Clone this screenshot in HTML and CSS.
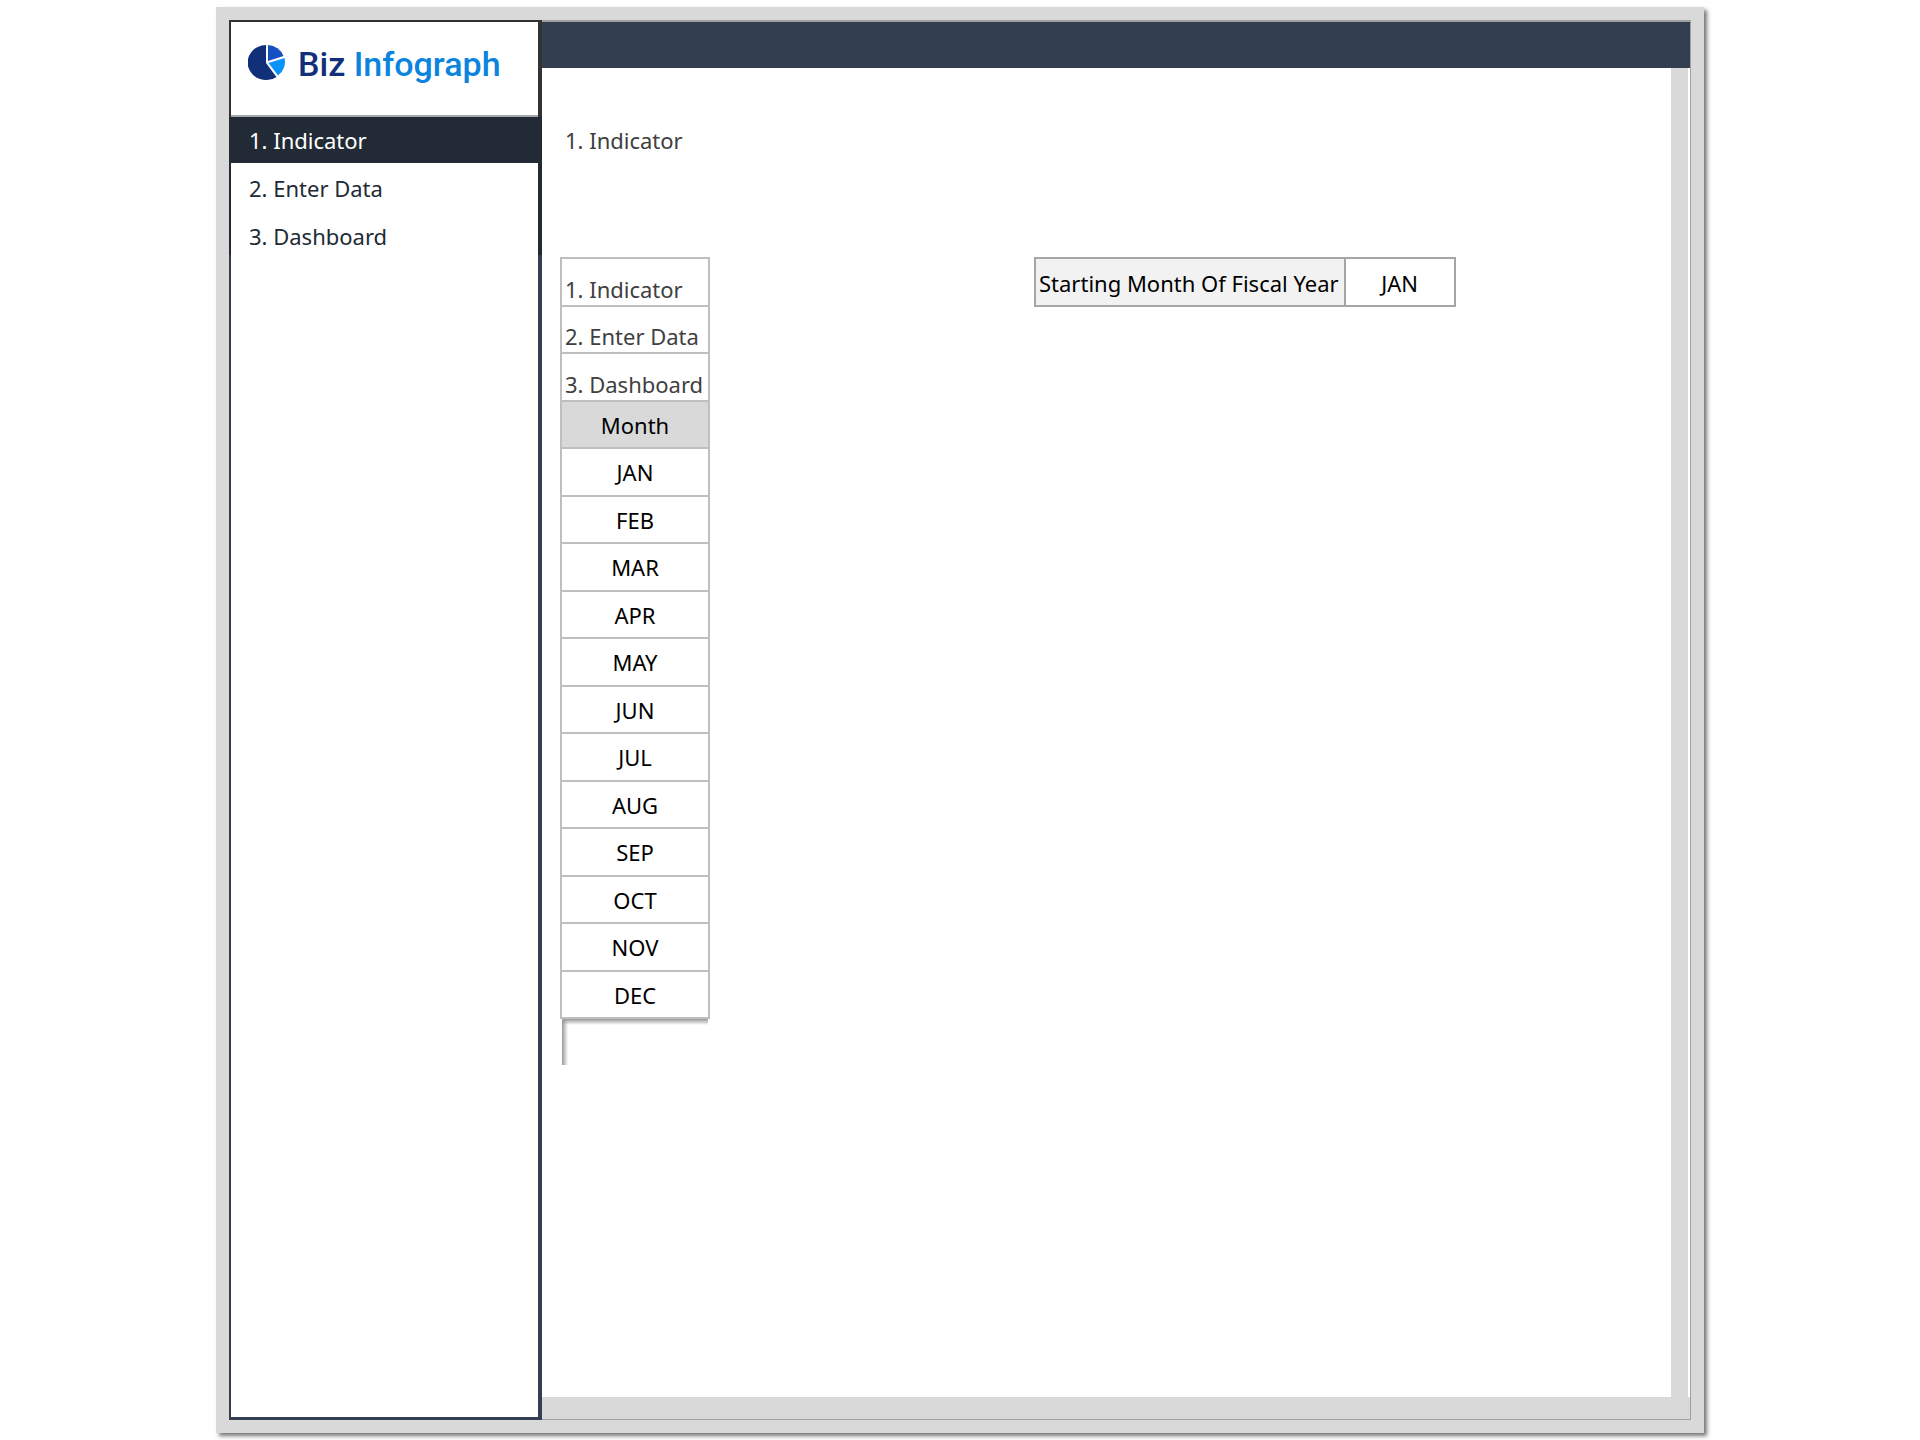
FILE: index.html
```html
<!DOCTYPE html>
<html lang="en">
<head>
<meta charset="utf-8">
<title>Biz Infograph - Indicator</title>
<link rel="stylesheet" href="styles.css">
</head>
<body>
<div class="sheet">
  <aside class="sidebar">
    <div class="brand">
      <svg class="brand-mark" viewBox="0 0 38 36" width="38" height="36" aria-hidden="true">
        <path fill="#12307a" d="M18 1V19L28.500 33A18.500 17.500 0 1 1 18 1Z"/>
        <path fill="#1450c0" d="M20 1A18 17 0 0 1 35.500 12L20 17Z"/>
        <path fill="#0a93fa" d="M36.500 14A17.500 17 0 0 1 30 31.500L20.500 19Z"/>
      </svg>
      <span class="brand-name"><span class="brand-dark">Biz</span> Infograph</span>
    </div>
    <nav class="menu">
      <a class="menu-item active" href="#indicator">1. Indicator</a>
      <a class="menu-item" href="#data">2. Enter Data</a>
      <a class="menu-item" href="#dashboard">3. Dashboard</a>
    </nav>
  </aside>
  <div class="workspace">
    <header class="topbar"></header>
    <main class="content">
      <h1 class="title">1. Indicator</h1>
      <div class="panels">
        <div class="list">
          <table class="months">
            <tbody>
              <tr class="link-row"><td>1. Indicator</td></tr>
              <tr class="link-row"><td>2. Enter Data</td></tr>
              <tr class="link-row"><td>3. Dashboard</td></tr>
              <tr><th scope="col">Month</th></tr>
              <tr><td>JAN</td></tr>
              <tr><td>FEB</td></tr>
              <tr><td>MAR</td></tr>
              <tr><td>APR</td></tr>
              <tr><td>MAY</td></tr>
              <tr><td>JUN</td></tr>
              <tr><td>JUL</td></tr>
              <tr><td>AUG</td></tr>
              <tr><td>SEP</td></tr>
              <tr><td>OCT</td></tr>
              <tr><td>NOV</td></tr>
              <tr><td>DEC</td></tr>
            </tbody>
          </table>
          <div class="list-shadow"></div>
        </div>
        <div class="fiscal">
          <label class="fiscal-label" for="start-month">Starting Month Of Fiscal Year</label>
          <select class="fiscal-select" id="start-month">
            <option>JAN</option><option>FEB</option><option>MAR</option><option>APR</option>
            <option>MAY</option><option>JUN</option><option>JUL</option><option>AUG</option>
            <option>SEP</option><option>OCT</option><option>NOV</option><option>DEC</option>
          </select>
        </div>
      </div>
    </main>
    <div class="bottom-strip"></div>
  </div>
</div>
</body>
</html>
```
FILE: styles.css
```css
* { box-sizing: border-box; }

body {
  margin: 0;
  padding: 7px 0;
  background: #fff;
  color: #000;
  font: 22px/30px "Noto Sans", sans-serif;
}

.sheet {
  display: flex;
  width: 77.5%;
  min-height: calc(100vh - 14px);
  margin: 0 auto;
  padding: 13px;
  background: #d9d9d9;
  box-shadow: 3px 3px 4px #777;
}

/* Sidebar */
.sidebar {
  flex: 0 0 313px;
  border: solid #333f50;
  border-width: 2px 4px 3px 2px;
  border-image: linear-gradient(#333 97px, #222b35 97px 235px, #333f50 235px) 2 4 3 2;
  background: #fff;
}

.brand {
  display: flex;
  align-items: center;
  gap: 12px;
  height: 95px;
  padding: 0 0 14px 17px;
  border-bottom: 2px solid #a6a9ad;
}

.brand-name {
  padding-top: 4px;
  color: #0a84dc;
  font: 500 34px/40px Roboto, sans-serif;
  white-space: nowrap;
}

.brand-dark { color: #12307a; }

.menu {
  display: flex;
  flex-direction: column;
  gap: 2px;
}

.menu-item {
  padding: 8px 18px;
  color: #222b35;
  text-decoration: none;
}

.menu-item.active {
  background: #222b35;
  color: #fff;
}

/* Workspace */
.workspace {
  display: flex;
  flex: 1;
  flex-direction: column;
  border: solid #a0a0a0;
  border-width: 2px 1px 1px 0;
}

.topbar {
  height: 46px;
  background: #333f50;
}

.content {
  flex: 1;
  padding: 57px 18px 0;
  border-right: 17px solid #d9d9d9;
  background: #fff;
  box-shadow: 2px 0 #fff;
  margin-right: 2px;
}

.bottom-strip {
  height: 22px;
  background: #d9d9d9;
}

.title {
  margin: 0 0 102px;
  padding-left: 5px;
  color: #404040;
  font: inherit;
}

.panels {
  display: flex;
  align-items: flex-start;
  gap: 324px;
}

.months {
  width: 150px;
  border-collapse: collapse;
  table-layout: fixed;
}

.months tr { height: 47px; }
.months tr:nth-child(odd) { height: 48px; }

.months td,
.months th {
  padding: 0;
  border: 2px solid #bfbfbf;
  font-weight: normal;
  text-align: center;
  white-space: nowrap;
}

.months th { background: #d9d9d9; }

.months .link-row td {
  padding: 13px 0 0 3px;
  color: #404040;
  text-align: left;
}

.list-shadow {
  height: 46px;
  margin: 0 2px;
  background:
    linear-gradient(#999, transparent) top / 100% 6px no-repeat,
    linear-gradient(to right, #999, transparent) left / 6px 100% no-repeat;
}

.fiscal {
  display: flex;
  height: 50px;
  border: 2px solid #a6a6a6;
}

.fiscal-label {
  padding: 9px 5px 7px 3px;
  background: #f2f2f2;
  white-space: nowrap;
}

.fiscal-select {
  width: 110px;
  padding: 2px 0 0;
  border: 0;
  border-left: 2px solid #a6a6a6;
  appearance: none;
  background: #fff;
  color: #000;
  font: inherit;
  text-align: center;
  text-align-last: center;
}
```
